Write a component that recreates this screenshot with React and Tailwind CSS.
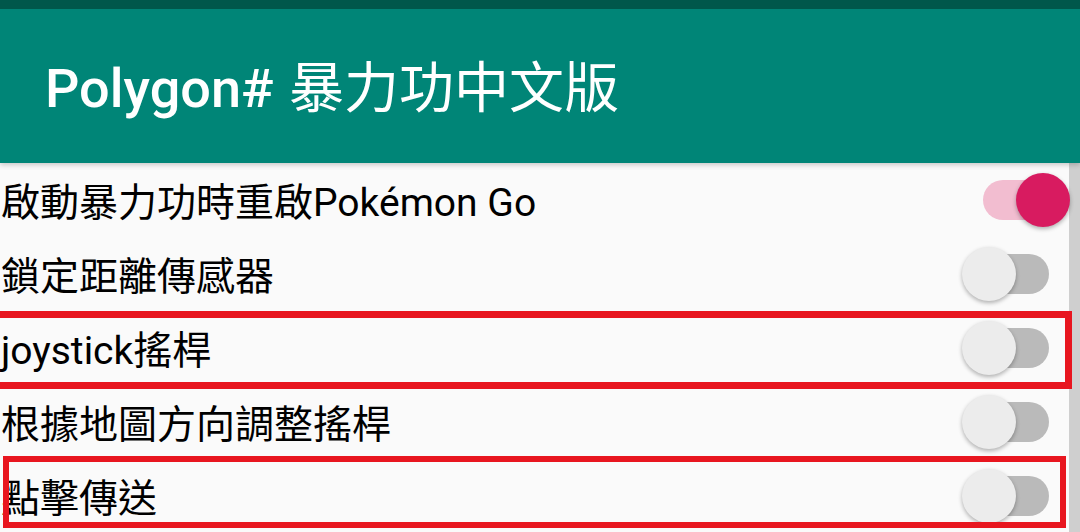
import React from 'react';

const rows = [
  { label: '啟動暴力功時重啟Pokémon Go', on: true },
  { label: '鎖定距離傳感器', on: false },
  { label: 'joystick搖桿', on: false },
  { label: '根據地圖方向調整搖桿', on: false },
  { label: '點擊傳送', on: false },
];

function Switch({ on }) {
  return (
    <div className={`relative w-[66px] h-[40px] rounded-full ${on ? 'bg-[#f2bdd0]' : 'bg-[#bababa]'}`}>
      <div
        className={`absolute top-[-7px] w-[54px] h-[54px] rounded-full shadow-[0_2px_4px_rgba(0,0,0,0.3)] ${
          on ? 'left-[33px] bg-[#d81b60]' : 'left-[-21px] bg-[#ececec]'
        }`}
      />
    </div>
  );
}

export default function App() {
  return (
    <div className="w-[1080px] h-[532px] overflow-hidden bg-[#fafafa] relative font-['Roboto','Noto_Sans_CJK_TC',sans-serif]">
      {/* status bar + toolbar */}
      <div className="relative z-10 shadow-[0_2px_5px_rgba(0,0,0,0.2)]">
        <div className="h-[9px] bg-[#00574b]" />
        <div className="h-[154px] bg-[#008577] flex items-center pl-[45px]">
          <h1 className="text-white text-[54px] leading-none mt-[4px]">
            <span className="font-medium">Polygon# </span>
            <span className="font-normal text-[55px] ml-[2px]">暴力功中文版</span>
          </h1>
        </div>
      </div>

      {/* list + scrollbar */}
      <div className="flex h-[369px]">
        <div className="flex-1">
          {rows.map((r) => (
            <div key={r.label} className="h-[74px] flex items-center justify-between pl-[1px] pr-[20px]">
              <span className="text-[39px] text-black leading-none mt-[6px]">{r.label}</span>
              <Switch on={r.on} />
            </div>
          ))}
        </div>
        <div className="w-[11px] bg-[#cfcfcf]" />
      </div>

      {/* red annotation boxes */}
      <div className="absolute left-[-10px] top-[311px] w-[1082px] h-[78px] border-[7px] border-[#e8161f] z-20" />
      <div className="absolute left-[3px] top-[456px] w-[1063px] h-[72px] border-[6px] border-[#e8161f] z-20" />
    </div>
  );
}
